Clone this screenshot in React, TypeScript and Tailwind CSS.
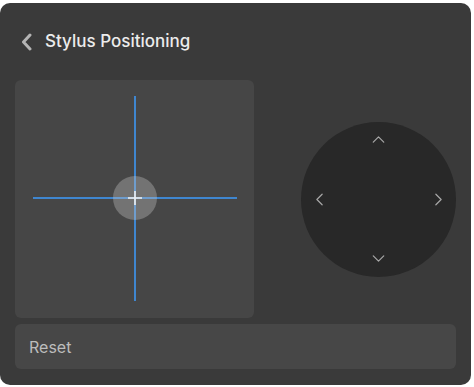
import { ChevronUp, ChevronDown, ChevronLeft, ChevronRight } from 'lucide-react'

export default function App() {
  return (
    <div className="h-[387px] w-[474px] bg-white pt-[3px] font-['Inter',sans-serif]">
      <div className="flex h-[382px] w-[471px] flex-col rounded-[10px] bg-[#3a3a3a] px-[15px]">
        <header className="flex h-[77px] items-center gap-[11px] pl-[5px]">
          <svg width="14" height="18" viewBox="0 0 14 18" className="text-[#b4b4b4]">
            <path
              d="M10 2 L3.5 9 L10 16"
              fill="none"
              stroke="currentColor"
              strokeWidth="3"
              strokeLinecap="round"
              strokeLinejoin="round"
            />
          </svg>
          <h1 className="text-[17px] font-medium text-[#ececec]">Stylus Positioning</h1>
        </header>

        <div className="flex items-center">
          <Crosshair />
          <div className="flex flex-1 justify-end">
            <Joystick />
          </div>
        </div>

        <button className="mt-[6px] flex h-[45px] items-center rounded-[6px] bg-[#474747] pl-[14px] text-left text-[16px] text-[#bcbcbc]">
          Reset
        </button>
      </div>
    </div>
  )
}

function Crosshair() {
  return (
    <div className="h-[238px] w-[239px] rounded-[6px] bg-[#464646]">
      <svg width="239" height="238" viewBox="0 0 239 238">
        <path d="M120 16 V221 M18 118 H222" stroke="#3f86cf" strokeWidth="2" />
        <circle cx="120" cy="118" r="22" fill="rgba(200,200,200,0.35)" />
        <path d="M120 111 V125 M113 118 H127" stroke="#f2f2f2" strokeWidth="1.6" />
      </svg>
    </div>
  )
}

function Joystick() {
  const icon = { size: 21, strokeWidth: 1.4 }
  return (
    <div className="grid h-[155px] w-[155px] grid-cols-[36px_1fr_36px] grid-rows-[36px_1fr_36px] place-items-center rounded-full bg-[#282828] text-[#a8a8a8]">
      <span />
      <ChevronUp {...icon} />
      <span />
      <ChevronLeft {...icon} />
      <span />
      <ChevronRight {...icon} />
      <span />
      <ChevronDown {...icon} />
      <span />
    </div>
  )
}
